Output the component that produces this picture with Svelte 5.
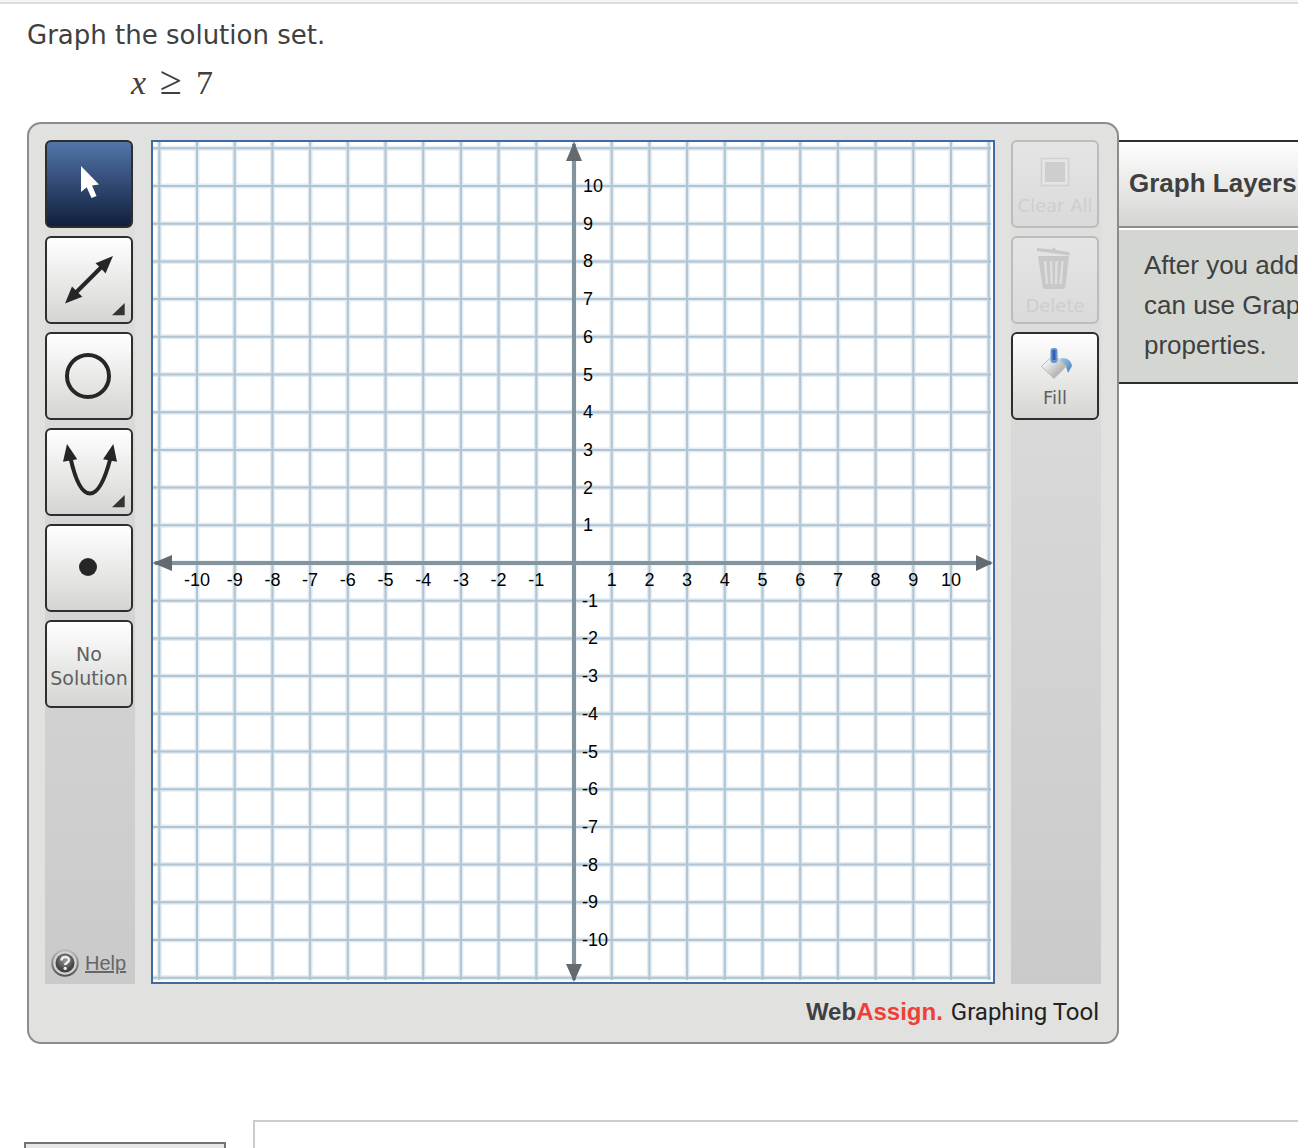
<script>
  const unit = 37.7;
  const origin = 421;
  const lines = Array.from({ length: 23 }, (_, i) => i - 11);
  const labels = lines.filter(n => n !== 0 && Math.abs(n) <= 10);

  let tools = ["Select", "Line", "Circle", "Parabola", "Point", "No Solution"];
  let selected = $state("Select");

  let at = n => origin + n * unit;
</script>

<main>
  <div class="topbar"></div>
  <section class="question">
    <p class="prompt">Graph the solution set.</p>
    <p class="math"><i>x</i><span class="relation">≥</span><span>7</span></p>
  </section>

  <div class="tool-row">
    <div class="graph-tool">
      <div class="workspace">
        <div class="column">
          {#each tools as tool}
            <button class:active={selected === tool} aria-label={tool} onclick={() => (selected = tool)}>
              {#if tool === "No Solution"}
                <span class="label two-line">No<br />Solution</span>
              {:else}
                <svg width="84" height="84" viewBox="0 0 84 84">
                  {#if tool === "Select"}
                    <path class="pointer" d="M34 24V50L39.7 45.3L44.5 56L49.5 54L45 43.5L52 42.5Z" />
                  {:else if tool === "Line"}
                    <path class="stroke" d="M26 57.5L58 25.5" />
                    <path d="M66 18L48.5 25.3L52 28.5L55.5 32L58.5 35.5Z" />
                    <path d="M18 65.5L25 48.5L28.5 52L32 55.5L35.3 58.7Z" />
                    <path class="corner" d="M77.7 65V77.3H65Z" />
                  {:else if tool === "Circle"}
                    <circle class="stroke" cx="41" cy="42" r="21" />
                  {:else if tool === "Parabola"}
                    <path class="stroke" d="M23.5 28C29 53 36 63.5 43 63.5S57 53 63.5 28" />
                    <path d="M20 14L16 31.7L30.3 29.3Z" />
                    <path d="M66.3 14L56 29.3L70 31.7Z" />
                    <path class="corner" d="M77.7 65V77.3H65Z" />
                  {:else}
                    <circle cx="41" cy="41" r="9" />
                  {/if}
                </svg>
              {/if}
            </button>
          {/each}
          <a class="help" href="#help">
            <svg width="28" height="28" viewBox="0 0 28 28">
              <defs>
                <radialGradient id="ball" cx="50%" cy="35%">
                  <stop offset="0" stop-color="#999" />
                  <stop offset="1" stop-color="#444" />
                </radialGradient>
                <linearGradient id="rim" x1="0" y1="0" x2="0" y2="1">
                  <stop offset="0" stop-color="#bbb" />
                  <stop offset="1" stop-color="#555" />
                </linearGradient>
              </defs>
              <circle cx="14" cy="14" r="12.8" fill="#d2d2d2" stroke="url(#rim)" stroke-width="2" />
              <circle cx="14" cy="14" r="9.5" fill="url(#ball)" />
              <path d="M10.5 11.5C10.5 6.8 18 7 18 11C18 13.8 14.2 13.4 14.2 16" fill="none" stroke="#eee" stroke-width="2.6" />
              <circle cx="14.2" cy="19.4" r="1.7" fill="#eee" />
            </svg>
            <span>Help</span>
          </a>
        </div>

        <svg class="graph" viewBox="0 0 840 840">
          {#each lines as n}
            <path class="halo" d="M{at(n)} 0V838M0 {at(n)}H838" />
          {/each}
          {#each lines as n}
            <path class="grid" d="M{at(n)} 0V838M0 {at(n)}H838" />
          {/each}
          <path class="axis" d="M{origin} 2V838M2 {origin}H838" />
          <path class="arrow" d="M421 0L413 19H429ZM421 840L413 822H429ZM0 421L19 413V429ZM840 421L823 413V429Z" />
          {#each labels as n}
            <text class="x" x={at(n)} y="444">{n}</text>
            <text x={n > 0 ? 430 : 429} y={at(-n) + 6}>{n}</text>
          {/each}
        </svg>

        <div class="column">
          <button disabled>
            <svg width="84" height="52" viewBox="0 0 84 52">
              <rect x="28.5" y="16.5" width="27" height="27" fill="#e4e4e4" stroke="#d0d0d0" stroke-width="1.5" />
              <rect x="32" y="20" width="20" height="20" fill="#cecece" />
            </svg>
            <span class="label">Clear All</span>
          </button>
          <button disabled>
            <svg width="84" height="56" viewBox="0 0 84 56">
              <path d="M24 10L39 11.5L41 9L43 12L56.5 14V17.5L24 13Z" fill="#c8c8c8" />
              <path d="M25 18H56L52.5 48Q52 51 49 51H33Q30 51 29.5 48Z" fill="#c8c8c8" />
              <path d="M32 23L34 46M38 23L38.7 46M43.5 23L43 46M49.5 23L47.5 46" stroke="#dedede" stroke-width="2.4" />
            </svg>
            <span class="label">Delete</span>
          </button>
          <button>
            <svg width="84" height="52" viewBox="0 0 84 52">
              <defs>
                <linearGradient id="bucket" x1="0" y1="0" x2="1" y2="1">
                  <stop offset="0.2" stop-color="#fafafa" />
                  <stop offset="1" stop-color="#8e8e8e" />
                </linearGradient>
                <linearGradient id="drip" x1="0" y1="0" x2="1" y2="1">
                  <stop offset="0" stop-color="#a9cce8" />
                  <stop offset="1" stop-color="#3f7fb8" />
                </linearGradient>
              </defs>
              <path d="M47 24.5C53 23 58 26 59 32L55 39C53.5 35 54 32 49 30Z" fill="url(#drip)" />
              <path d="M28.5 32.5L40.5 21L53.5 32L41 44.5Z" fill="url(#bucket)" stroke="#bbb" />
              <rect x="37.5" y="14" width="7" height="15" rx="3" fill="#6a94d0" />
              <path d="M41 16V26" stroke="#2f5fb0" stroke-width="3" />
            </svg>
            <span class="label">Fill</span>
          </button>
        </div>
      </div>
      <div class="brand"><b>Web<em>Assign.</em></b><span>Graphing Tool</span></div>
    </div>

    <aside>
      <h2>Graph Layers</h2>
      <p>After you add<br />can use Grap<br />properties.</p>
    </aside>
  </div>

  <div class="bottom">
    <button class="submit" aria-label="Submit"></button>
    <div class="answer"></div>
  </div>
</main>

<style>
  :global(body) {
    margin: 0;
    background: #fff;
  }
  main {
    display: flex;
    flex-direction: column;
    height: 100vh;
    overflow: hidden;
    color: #404040;
    font-family: "Liberation Sans", Arial, sans-serif;
  }
  .topbar {
    flex: none;
    height: 2px;
    background: #f5f5f5;
    border-bottom: 2px solid #ddd;
  }
  .question {
    flex: none;
    height: 118px;
    padding-left: 27px;
  }
  .question p {
    margin: 0;
  }
  .prompt {
    padding-top: 13px;
    font: 26px/36px "DejaVu Sans", Verdana, sans-serif;
  }
  .question .math {
    display: flex;
    align-items: baseline;
    gap: 14px;
    margin: 6px 0 0 104px;
    font: 34px/44px "Liberation Serif", "Times New Roman", serif;
  }
  .relation {
    font-size: 40px;
  }
  .tool-row {
    display: flex;
    flex: none;
    align-items: flex-start;
    padding-left: 27px;
  }
  .graph-tool {
    box-sizing: border-box;
    flex: 0 1 1092px;
    padding: 16px 16px 0;
    background: #e1e1df;
    border: 2px solid #8c8c8c;
    border-radius: 14px;
  }
  .workspace {
    display: flex;
    gap: 16px;
  }
  .column {
    display: flex;
    flex: none;
    flex-direction: column;
    gap: 8px;
    width: 90px;
    background: linear-gradient(#e1e1e0, #d5d5d5 50%, #cacaca);
  }
  .column button {
    display: flex;
    flex-direction: column;
    align-items: center;
    box-sizing: border-box;
    width: 88px;
    height: 88px;
    padding: 0;
    color: #606060;
    background: linear-gradient(#fff, #d5d6d2);
    border: 2px solid #2e2e2e;
    border-radius: 6px;
    cursor: pointer;
  }
  .column button.active {
    background: linear-gradient(#5275a8, #111f3e);
  }
  .column button:disabled {
    color: #cecece;
    background: linear-gradient(#e5e5e5, #dadada);
    border-color: #bcbcbc;
    cursor: default;
  }
  button svg {
    flex: none;
    fill: #262626;
  }
  .stroke {
    fill: none;
    stroke: #262626;
    stroke-width: 4;
  }
  .pointer {
    fill: #fff;
  }
  .corner {
    fill: #333;
  }
  .label {
    font: 18px/24px "DejaVu Sans", Verdana, sans-serif;
    white-space: nowrap;
  }
  .two-line {
    margin: auto;
    padding-top: 4px;
    font-size: 19px;
  }
  .help {
    display: flex;
    align-items: center;
    gap: 6px;
    margin-top: auto;
    padding: 0 0 7px 6px;
    color: #666;
    font-size: 20px;
  }
  .graph {
    flex: 1;
    min-width: 0;
    aspect-ratio: 1;
    background: #fff;
    border: 2px solid #4169a1;
  }
  .halo {
    stroke: #e3ecf2;
    stroke-width: 5;
  }
  .grid {
    stroke: #b0c4d2;
    stroke-width: 2;
  }
  .axis {
    stroke: #82949e;
    stroke-width: 4;
  }
  .arrow {
    fill: #646b70;
  }
  .graph text {
    fill: #000;
    font-size: 18px;
  }
  .graph .x {
    text-anchor: middle;
  }
  .brand {
    display: flex;
    justify-content: flex-end;
    gap: 8px;
    padding: 12px 2px 14px 0;
    font-size: 24px;
    line-height: 32px;
  }
  .brand em {
    color: #ee4036;
    font-style: normal;
  }
  .brand span {
    color: #222;
    font-family: Roboto, sans-serif;
  }
  aside {
    flex: 1;
    min-width: 0;
    margin-top: 18px;
    overflow: hidden;
    font-size: 26px;
    line-height: 40px;
    white-space: nowrap;
    border-top: 2px solid #2e2e2e;
    border-bottom: 2px solid #2e2e2e;
  }
  h2 {
    margin: 0 0 2px;
    padding: 21px 10px 23px;
    font-size: 26px;
    line-height: 40px;
    background: linear-gradient(#fff, #d5d6d2);
    border-bottom: 2px solid #8c8c8c;
    box-sizing: border-box;
  }
  aside p {
    margin: 0;
    padding: 15px 0 17px 25px;
    background: #d4d6d1;
  }
  .bottom {
    display: flex;
    flex: 1;
    gap: 27px;
    padding: 76px 0 0 24px;
  }
  .submit {
    flex: none;
    width: 202px;
    height: 60px;
    margin-top: 22px;
    background: #e6e6e6;
    border: 2px solid #737373;
  }
  .answer {
    flex: 1;
    border: 2px solid #ccc;
    border-width: 2px 0 0 2px;
  }
</style>
